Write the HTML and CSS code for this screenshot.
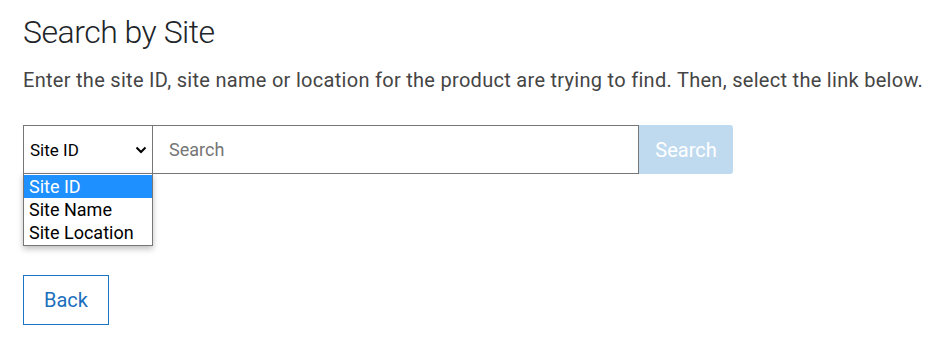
FILE: index.html
```html
<!DOCTYPE html>
<html lang="en">
<head>
  <meta charset="UTF-8">
  <title>Search by Site</title>
  <link rel="stylesheet" href="styles.css">
</head>
<body>
  <div class="page">
    <h1 class="title">Search by Site</h1>
    <p class="lead">Enter the site ID, site name or location for the product are trying to find. Then, select the link below.</p>

    <div class="searchbar">
      <div class="picker">
        <div class="picker-box">
          <span>Site ID</span>
          <svg class="chevron" width="12" height="8" viewBox="0 0 12 8"><path d="M1.5 1.5 6 6l4.5-4.5" fill="none" stroke="#000" stroke-width="2"/></svg>
        </div>
        <ul class="picker-list">
          <li class="on">Site ID</li>
          <li>Site Name</li>
          <li>Site Location</li>
        </ul>
      </div>
      <div class="field">Search</div>
      <button class="go" disabled>Search</button>
    </div>

    <a class="back" href="#">Back</a>
  </div>
</body>
</html>
```

FILE: styles.css
```css
body{margin:0; font-family:Roboto, "Liberation Sans", sans-serif; background:#fff;}
.page{padding:0 23px;}
.title{margin:0; padding-top:12px; font-size:32px; line-height:40px; font-weight:300; letter-spacing:-0.5px; color:#212529;}
.lead{margin:14px 0 0; font-size:20px; line-height:28px; letter-spacing:0.29px; color:#454545; white-space:nowrap;}
.searchbar{display:flex; margin-top:31px; height:49px;}
.picker{position:relative; width:130px;}
.picker-box{box-sizing:border-box; height:49px; border:1px solid #767676; display:flex; align-items:center; justify-content:space-between; padding:0 5px 0 6px; font-size:17px; color:#000;}
.chevron{margin-top:1px;}
.picker-list{position:absolute; left:0; top:48px; width:130px; box-sizing:border-box; margin:0; padding:1px 0; list-style:none; background:#fff; border:1px solid #767676; box-shadow:0 3px 6px rgba(0,0,0,.25); font-size:18px; color:#000;}
.picker-list li{height:23px; line-height:23px; padding-left:5px;}
.picker-list li.on{background:#1e90ff; color:#fff;}
.field{box-sizing:border-box; width:486px; height:49px; border:1px solid #767676; border-left:0; padding-left:16px; display:flex; align-items:center; font-size:18px; color:#767676;}
.go{width:94px; height:49px; border:0; border-radius:0 3px 3px 0; background:#bfdaef; color:#fff; font-family:inherit; font-size:20px; padding:0;}
.back{display:flex; align-items:center; justify-content:center; box-sizing:border-box; width:86px; height:50px; margin-top:101px; border:1px solid #1c75c4; color:#1c6fbd; text-decoration:none; font-size:20px;}
```
